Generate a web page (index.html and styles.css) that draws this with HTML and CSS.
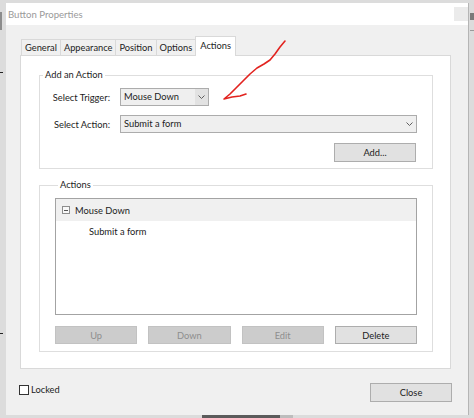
FILE: index.html
```html
<!DOCTYPE html>
<html lang="en">
<head>
<meta charset="utf-8">
<title>Button Properties</title>
<link rel="stylesheet" href="styles.css">
</head>
<body>
<div class="desk">
  <span class="mark mark-left-top"></span>
  <span class="mark mark-left-a"></span>
  <span class="mark mark-left-b"></span>
  <span class="mark mark-right-top"></span>
  <span class="mark mark-right-line"></span>
  <span class="mark mark-bottom-dark"></span>
  <span class="mark mark-bottom-light"></span>
</div>

<div class="dialog">
  <div class="titlebar">
    <span class="title">Button Properties</span>
    <span class="title-btn"></span>
  </div>

  <div class="content">
    <div class="tabs">
      <div class="tab">General</div>
      <div class="tab">Appearance</div>
      <div class="tab">Position</div>
      <div class="tab">Options</div>
      <div class="tab active">Actions</div>
    </div>

    <div class="panel">
      <fieldset class="group group-add">
        <legend>Add an Action</legend>
        <div class="form-grid">
          <span class="field-label">Select Trigger:</span>
          <div class="select select-short">
            <span class="select-text">Mouse Down</span>
            <span class="select-arrow shaded">
              <svg width="7" height="4" viewBox="0 0 7 4"><path d="M0.5 0.5 L3.5 3.5 L6.5 0.5" fill="none" stroke="#5f5f5f" stroke-width="1"/></svg>
            </span>
          </div>
          <span class="field-label">Select Action:</span>
          <div class="select select-wide">
            <span class="select-text">Submit a form</span>
            <span class="select-arrow">
              <svg width="7" height="4" viewBox="0 0 7 4"><path d="M0.5 0.5 L3.5 3.5 L6.5 0.5" fill="none" stroke="#5f5f5f" stroke-width="1"/></svg>
            </span>
          </div>
        </div>
        <div class="add-row">
          <button class="btn">Add...</button>
        </div>
      </fieldset>

      <fieldset class="group group-actions">
        <legend>Actions</legend>
        <div class="listbox">
          <div class="tree-row tree-head">
            <span class="collapse-box"><span class="collapse-minus"></span></span>
            <span>Mouse Down</span>
          </div>
          <div class="tree-row tree-child">Submit a form</div>
        </div>
        <div class="btn-row">
          <button class="btn" disabled>Up</button>
          <button class="btn" disabled>Down</button>
          <button class="btn" disabled>Edit</button>
          <button class="btn">Delete</button>
        </div>
      </fieldset>
    </div>

    <div class="footer">
      <label class="check"><span class="check-box"></span><span>Locked</span></label>
      <button class="btn btn-close">Close</button>
    </div>
  </div>
</div>

<svg class="annotation" width="474" height="418" viewBox="0 0 474 418">
  <path d="M285 41 L280 47 L275 54 L270 60 L264 64 L257 68 L250 74 L243 81 L236 88 L230 94 L224 99 L232 97 L240 96 L246 94" fill="none" stroke="#e2231f" stroke-width="1.6" stroke-linecap="round" stroke-linejoin="round"/>
</svg>
</body>
</html>
```

FILE: styles.css
```css
* {
  box-sizing: border-box;
}

html, body {
  margin: 0;
  padding: 0;
}

body {
  width: 474px;
  height: 418px;
  overflow: hidden;
  position: relative;
  background: #dcdcdc;
  font-family: Lato, "Open Sans", "Liberation Sans", sans-serif;
  font-size: 9.3px;
  color: #1c1c1c;
}

/* fragments of the windows behind the dialog */
.desk {
  position: absolute;
  inset: 0;
}
.mark {
  position: absolute;
  display: block;
}
.mark-left-top { left: 0; top: 12px; width: 2px; height: 18px; background: #8c8c8c; }
.mark-left-a { left: 0; top: 72px; width: 3px; height: 1px; background: #222; }
.mark-left-b { left: 0; top: 333px; width: 3px; height: 1px; background: #222; }
.mark-right-top { left: 470px; top: 13px; width: 4px; height: 7px; background: #7a7a7a; }
.mark-right-line { left: 470px; top: 30px; width: 4px; height: 1px; background: #9a9a9a; }
.mark-bottom-dark { left: 202px; top: 415px; width: 78px; height: 3px; background: #5b5b5b; }
.mark-bottom-light { left: 280px; top: 415px; width: 13px; height: 3px; background: #bdbdbd; }

.dialog {
  position: relative;
  margin: 3px 0 0 6px;
  width: 463px;
  height: 412px;
  background: #f0f0f0;
  border-right: 1px solid #b5b5b5;
}

.titlebar {
  height: 22px;
  background: #ffffff;
  display: flex;
  align-items: center;
  justify-content: space-between;
  padding-left: 2px;
}

.title {
  font-size: 9.6px;
  color: #9a9a9a;
}

.title-btn {
  width: 14px;
  height: 14px;
  background: #ebebeb;
}

.content {
  padding: 11px 0 0 14px;
}

.tabs {
  display: flex;
  align-items: flex-end;
  height: 19px;
  padding-left: 1px;
}

.tab {
  height: 16px;
  line-height: 15px;
  padding: 0 3px;
  border: 1px solid #d9d9d9;
  border-bottom: none;
  margin-right: -1px;
  background: #f0f0f0;
  color: #1c1c1c;
}

.tab.active {
  position: relative;
  z-index: 1;
  height: 20px;
  line-height: 17px;
  margin-bottom: -1px;
  padding: 0 4px;
  background: #ffffff;
}

.panel {
  width: 431px;
  height: 314px;
  background: #ffffff;
  border: 1px solid #d9d9d9;
  padding: 0 17px 0 18px;
}

.group {
  margin: 0;
  padding: 0;
  min-width: 0;
  border: 1px solid #dedede;
}

.group legend {
  margin-left: 3px;
  padding: 0 2px;
  line-height: 12px;
  font-size: 9.3px;
  color: #1c1c1c;
}

.group-add {
  margin-top: 13px;
  padding: 7px 15px 6px 0;
}

.group-actions {
  margin-top: 10px;
  padding: 7px 15px 7px 15px;
}

.form-grid {
  display: grid;
  grid-template-columns: 70px 1fr;
  column-gap: 10px;
  row-gap: 9px;
  align-items: center;
}

.field-label {
  text-align: right;
}

.select {
  height: 18px;
  display: flex;
  align-items: stretch;
  border: 1px solid #acacac;
  background: #efefef;
}

.select-short {
  width: 89px;
}

.select-wide {
  width: 100%;
}

.select-text {
  flex: 1;
  padding-left: 3px;
  line-height: 16px;
}

.select-arrow {
  width: 13px;
  display: flex;
  align-items: center;
  justify-content: center;
}

.select-arrow.shaded {
  background: #e2e2e2;
}

.add-row {
  display: flex;
  justify-content: flex-end;
  margin-top: 10px;
  padding-right: 1px;
}

.btn {
  font-family: inherit;
  font-size: 9.3px;
  color: #1c1c1c;
  height: 19px;
  width: 82px;
  padding: 0;
  margin: 0;
  background: #e1e1e1;
  border: 1px solid #adadad;
  border-radius: 0;
}

.btn:disabled {
  background: #cccccc;
  border-color: #c2c2c2;
  color: #8e8e8e;
}

.listbox {
  height: 117px;
  border: 1px solid #a3a3a3;
  background: #ffffff;
}

.tree-row {
  display: flex;
  align-items: center;
}

.tree-head {
  height: 22px;
  background: #f0f0f0;
  padding-left: 6px;
}

.collapse-box {
  width: 8px;
  height: 8px;
  border: 1px solid #8d8d8d;
  background: #f8f8f8;
  margin-right: 5px;
  display: flex;
  align-items: center;
  justify-content: center;
}

.collapse-minus {
  width: 4px;
  height: 1px;
  background: #555;
}

.tree-child {
  height: 20px;
  padding-left: 33px;
}

.btn-row {
  display: grid;
  grid-template-columns: repeat(4, 1fr);
  column-gap: 11px;
  margin-top: 11px;
}

.btn-row .btn {
  width: 100%;
  height: 18px;
}

.footer {
  display: flex;
  justify-content: space-between;
  align-items: flex-start;
  width: 433px;
  margin-left: -1px;
}

.check {
  display: flex;
  align-items: center;
  margin-top: 15px;
  gap: 2px;
}

.check-box {
  width: 10px;
  height: 10px;
  border: 1px solid #333333;
  background: #ffffff;
}

.btn-close {
  margin-top: 14px;
}

.annotation {
  position: absolute;
  left: 0;
  top: 0;
  pointer-events: none;
}
```
